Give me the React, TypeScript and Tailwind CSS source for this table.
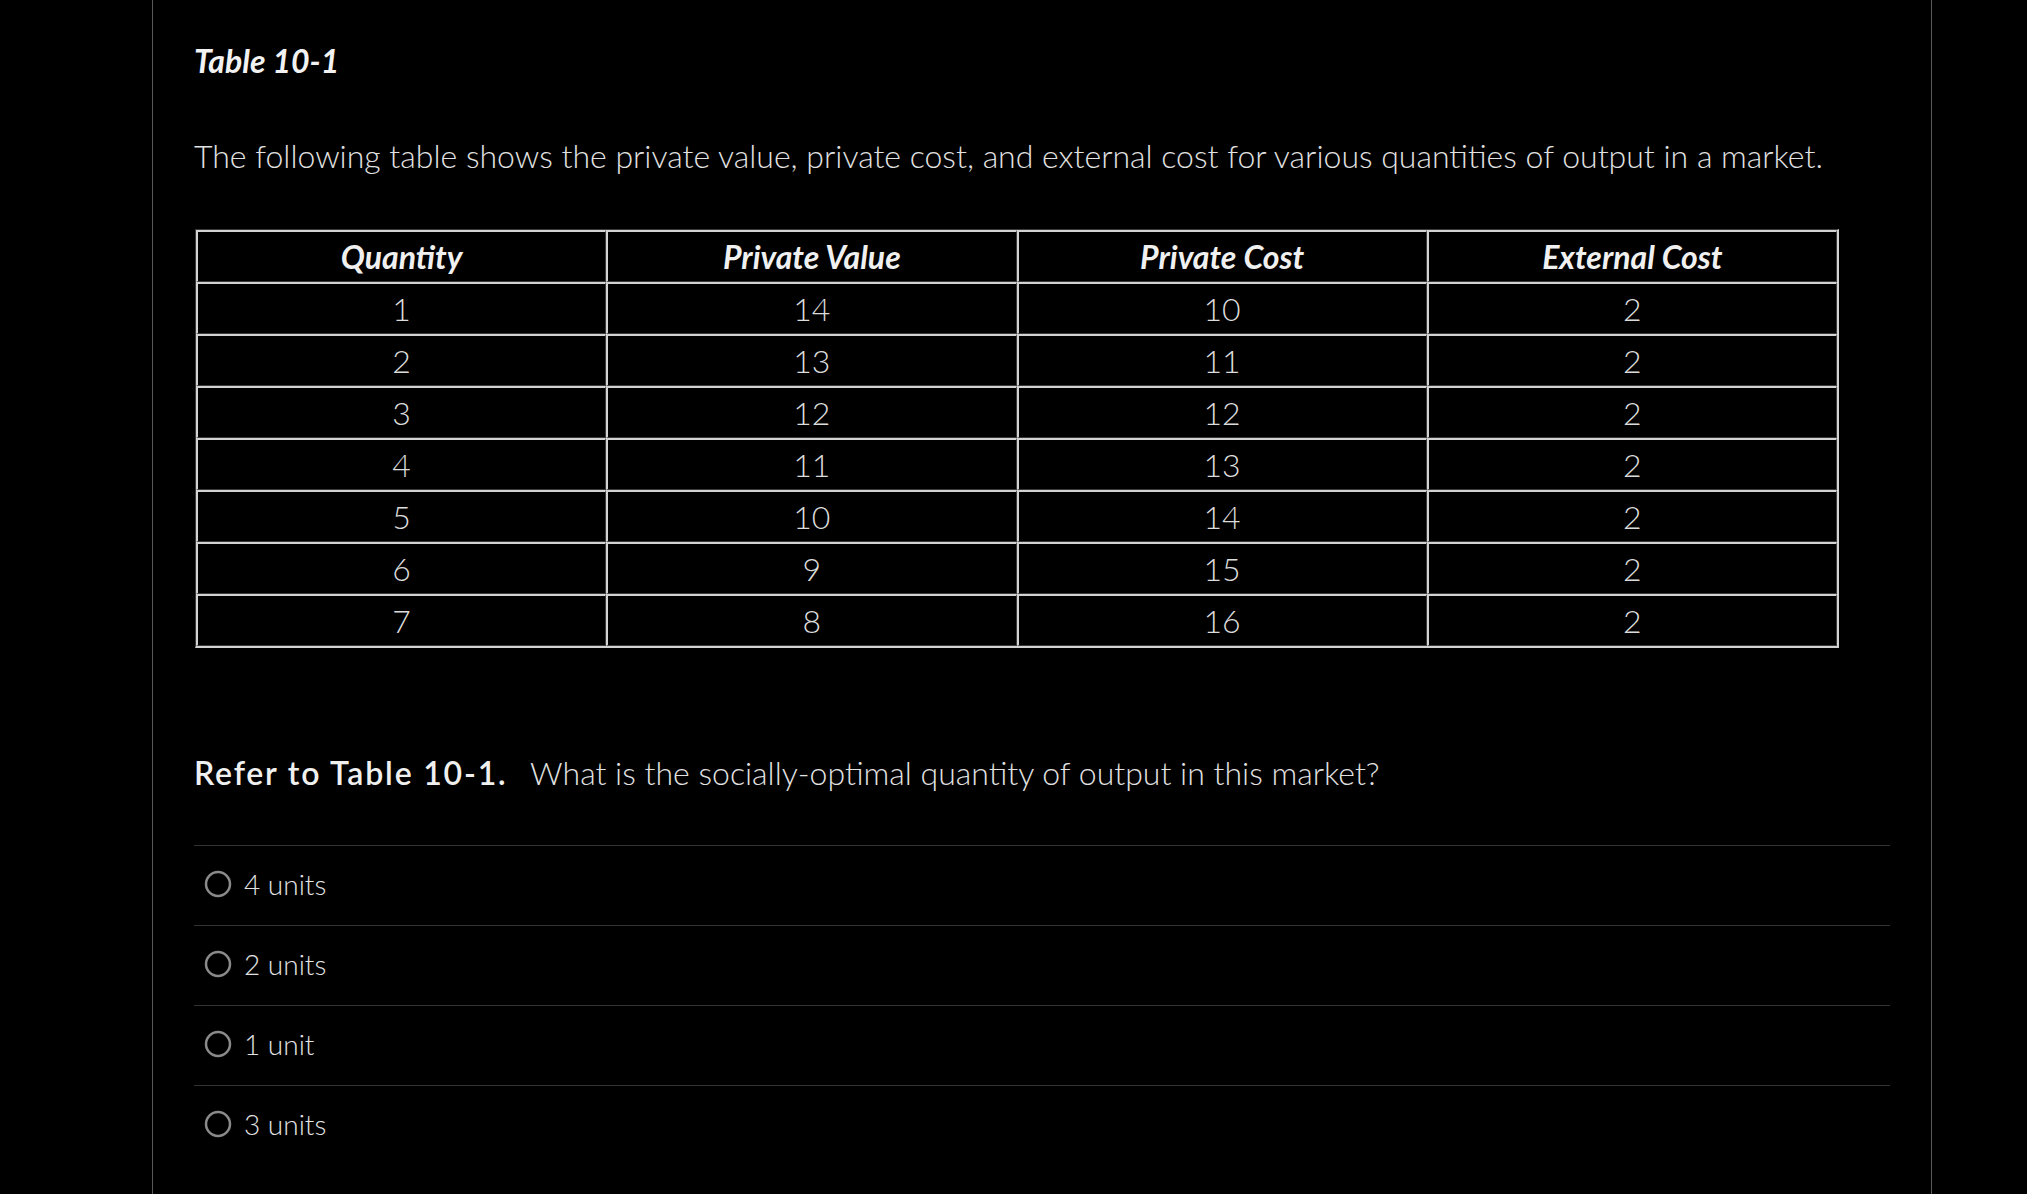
import React from "react";

const rows = [
  [1, 14, 10, 2],
  [2, 13, 11, 2],
  [3, 12, 12, 2],
  [4, 11, 13, 2],
  [5, 10, 14, 2],
  [6, 9, 15, 2],
  [7, 8, 16, 2],
];

const options = ["4 units", "2 units", "1 unit", "3 units"];

function Radio() {
  return (
    <svg width="28" height="28" viewBox="0 0 28 28" className="shrink-0">
      <circle cx="14" cy="14" r="12" fill="none" stroke="#8a8a8a" strokeWidth="2.5" />
    </svg>
  );
}

export default function App() {
  const cell =
    "h-[52px] border-t-2 border-l-2 border-b border-r border-t-[#d2d2d2] border-l-[#d2d2d2] border-b-[#3a3a3a] border-r-[#3a3a3a] text-center align-middle p-0";
  return (
    <div
      className="min-h-[1194px] bg-black pl-[152px]"
      style={{ fontFamily: "Lato, 'Open Sans', sans-serif" }}
    >
      <div className="w-[1780px] min-h-[1194px] border-l border-r border-[#5a5a5a] px-[41px] pt-[42px]">
        <div className="text-[32px] leading-[38px] font-bold italic text-[#f2f2f2]">
          Table 10-1
        </div>
        <p className="mt-[57px] text-[32px] leading-[38px] font-light text-[#e2e2e2]">
          The following table shows the private value, private cost, and external cost for various quantities of output in a market.
        </p>
        <table className="mt-[54px] ml-[1px] w-[1644px] table-fixed border-separate border-spacing-0 border-t border-l border-b-2 border-r-2 border-t-[#3a3a3a] border-l-[#3a3a3a] border-b-[#d2d2d2] border-r-[#d2d2d2]">
          <thead>
            <tr>
              {["Quantity", "Private Value", "Private Cost", "External Cost"].map((h) => (
                <th
                  key={h}
                  className={`${cell} text-[32px] font-bold italic text-[#f0f0f0]`}
                >
                  {h}
                </th>
              ))}
            </tr>
          </thead>
          <tbody>
            {rows.map((r, i) => (
              <tr key={i}>
                {r.map((v, j) => (
                  <td key={j} className={`${cell} text-[32px] font-light text-[#dcdcdc]`}>
                    {v}
                  </td>
                ))}
              </tr>
            ))}
          </tbody>
        </table>
        <div className="mt-[106px] text-[32px] leading-[38px] text-[#e2e2e2]">
          <span className="font-semibold text-[#f0f0f0] tracking-[1.8px]">Refer to Table 10-1.</span>
          <span className="font-light ml-[6px]">&nbsp;&nbsp;What is the socially-optimal quantity of output in this market?</span>
        </div>
        <div className="mt-[53px]">
          {options.map((o) => (
            <div
              key={o}
              className="h-[80px] border-t border-[#333333] flex items-center gap-[12px] pl-[10px] pb-[4px]"
            >
              <Radio />
              <span className="text-[28px] font-light text-[#e2e2e2] leading-[36px]">{o}</span>
            </div>
          ))}
        </div>
      </div>
    </div>
  );
}
